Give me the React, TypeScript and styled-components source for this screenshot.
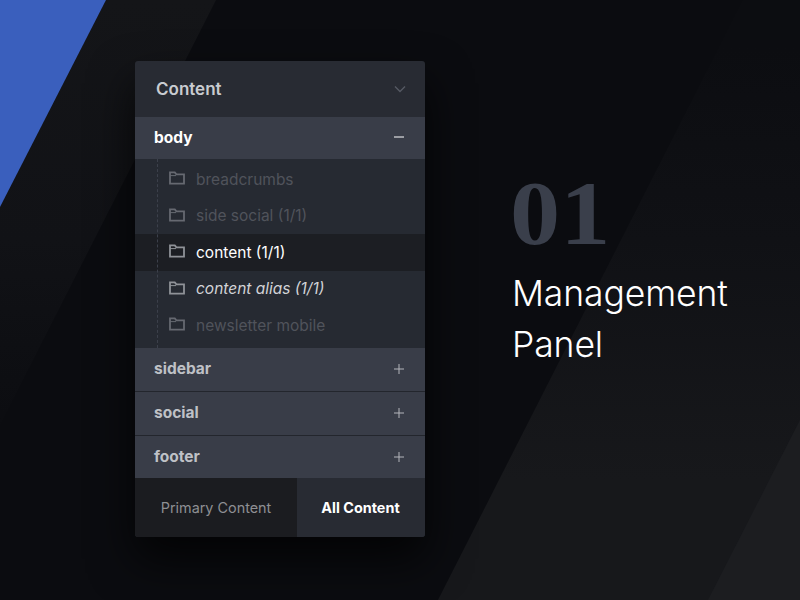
import React from "react";
import styled, { createGlobalStyle } from "styled-components";

const GlobalStyle = createGlobalStyle`
  html, body {
    margin: 0;
    padding: 0;
    background: #0b0c10;
  }
  * {
    box-sizing: border-box;
  }
`;

const Stage = styled.div`
  position: relative;
  display: flex;
  align-items: flex-start;
  width: 800px;
  height: 600px;
  padding: 61px 0 0 135px;
  overflow: hidden;
  background: #0b0c10;
  font-family: Inter, "Liberation Sans", sans-serif;
`;

const LeftBand = styled.div`
  position: absolute;
  inset: 0;
  background: linear-gradient(180deg, #141518 0%, #111216 40%, #0b0c10 75%);
  clip-path: polygon(106px 0, 216px 0, 0 425px, 0 207px);
`;

const BlueWedge = styled.div`
  position: absolute;
  inset: 0;
  background: #3a5fbd;
  clip-path: polygon(0 0, 106px 0, 0 207px);
`;

const RightBand = styled.div`
  position: absolute;
  inset: 0;
  background: linear-gradient(180deg, #0c0d11 8%, #101115 40%, #17181b 80%);
  clip-path: polygon(743px 0, 800px 0, 800px 600px, 438px 600px);
`;

const CornerBand = styled.div`
  position: absolute;
  inset: 0;
  background: #1c1d20;
  clip-path: polygon(800px 420px, 800px 600px, 708px 600px);
`;

const Panel = styled.div`
  position: relative;
  flex: none;
  width: 290px;
  height: 476px;
  border-radius: 3px;
  overflow: hidden;
  background: #282b33;
  box-shadow: 0 22px 45px rgba(0, 0, 0, 0.75);
`;

const PanelHeader = styled.div`
  display: flex;
  align-items: center;
  justify-content: space-between;
  height: 56px;
  padding: 0 19px 1px 21px;
  color: #c9cbd0;
  font-size: 17px;
  font-weight: 600;
`;

const SectionRow = styled.div<{ $height: number; $open?: boolean; $line?: boolean }>`
  display: flex;
  align-items: center;
  justify-content: space-between;
  height: ${(p) => p.$height}px;
  padding: 0 21px ${(p) => (p.$open || p.$line ? 2 : 1)}px 19px;
  background: #393d48;
  color: ${(p) => (p.$open ? "#ffffff" : "#bfc1c6")};
  font-size: 15.5px;
  font-weight: 700;
  border-bottom: ${(p) => (p.$line ? "1px solid #23262d" : "none")};
`;

const FolderList = styled.div`
  position: relative;
  height: 189px;
  padding-top: 2px;
  background: #262a32;
`;

const DashedLine = styled.div`
  position: absolute;
  top: 0;
  bottom: 0;
  left: 22px;
  border-left: 1px dashed #3c404b;
`;

const FolderRow = styled.div<{ $tone: "dim" | "active" | "alias" }>`
  display: flex;
  align-items: center;
  gap: 11px;
  height: 36.5px;
  padding-left: 34px;
  background: ${(p) => (p.$tone === "active" ? "#1c1e23" : "transparent")};
  color: ${(p) =>
    p.$tone === "active" ? "#ffffff" : p.$tone === "alias" ? "#d2d3d7" : "#50535b"};
  font-size: 15.5px;
  font-style: ${(p) => (p.$tone === "alias" ? "italic" : "normal")};
  svg {
    flex: none;
    margin-top: -2px;
    color: ${(p) => (p.$tone === "dim" ? "#666971" : "#8f9298")};
  }
`;

const Tabs = styled.div`
  display: flex;
  height: 59px;
`;

const Tab = styled.div<{ $active?: boolean }>`
  display: flex;
  align-items: center;
  justify-content: center;
  width: ${(p) => (p.$active ? "128px" : "162px")};
  padding-right: ${(p) => (p.$active ? "1px" : "0")};
  background: ${(p) => (p.$active ? "#282b33" : "#1b1c20")};
  color: ${(p) => (p.$active ? "#ffffff" : "#8e8f93")};
  font-size: 14.4px;
  font-weight: ${(p) => (p.$active ? 700 : 400)};
`;

const Title = styled.div`
  position: relative;
  flex: none;
  margin: 106px 0 0 87px;
`;

const Number = styled.div`
  color: #3a3f4b;
  font-family: "Liberation Serif", serif;
  font-size: 92px;
  font-weight: 700;
  line-height: 92px;
  transform: scaleX(1.09);
  transform-origin: left center;
  margin-left: -2px;
`;

const Heading = styled.div`
  margin-top: 9px;
  color: #ffffff;
  font-size: 35.5px;
  font-weight: 300;
  letter-spacing: -0.1px;
  line-height: 51px;
`;

const Folder = () => (
  <svg width="16" height="14" viewBox="0 0 16 14" fill="none" stroke="currentColor" strokeWidth="1.8">
    <path d="M1 12.6V1.4h4.8l1.6 2h7.6v9.2z" />
    <path d="M1 4.6h6" strokeWidth="1" />
  </svg>
);

const Chevron = () => (
  <svg width="12" height="8" viewBox="0 0 12 8" fill="none" stroke="#555963" strokeWidth="1.4">
    <path d="M1 1.5l5 5 5-5" />
  </svg>
);

const Toggle = ({ open }: { open?: boolean }) => (
  <svg width="10" height="10" viewBox="0 0 10 10" fill="none" stroke={open ? "#ffffff" : "#b4b6bb"} strokeWidth="1">
    <path d="M0 5h10" />
    {!open && <path d="M5 0v10" />}
  </svg>
);

const folders: { name: string; tone: "dim" | "active" | "alias" }[] = [
  { name: "breadcrumbs", tone: "dim" },
  { name: "side social (1/1)", tone: "dim" },
  { name: "content (1/1)", tone: "active" },
  { name: "content alias (1/1)", tone: "alias" },
  { name: "newsletter mobile", tone: "dim" },
];

export default function App() {
  return (
    <Stage>
      <GlobalStyle />
      <LeftBand />
      <RightBand />
      <CornerBand />
      <BlueWedge />
      <Panel>
        <PanelHeader>
          Content
          <Chevron />
        </PanelHeader>
        <SectionRow $height={42} $open>
          body
          <Toggle open />
        </SectionRow>
        <FolderList>
          <DashedLine />
          {folders.map((f) => (
            <FolderRow key={f.name} $tone={f.tone}>
              <Folder />
              {f.name}
            </FolderRow>
          ))}
        </FolderList>
        <SectionRow $height={44} $line>
          sidebar
          <Toggle />
        </SectionRow>
        <SectionRow $height={44} $line>
          social
          <Toggle />
        </SectionRow>
        <SectionRow $height={42}>
          footer
          <Toggle />
        </SectionRow>
        <Tabs>
          <Tab>Primary Content</Tab>
          <Tab $active>All Content</Tab>
        </Tabs>
      </Panel>
      <Title>
        <Number>01</Number>
        <Heading>
          Management
          <br />
          Panel
        </Heading>
      </Title>
    </Stage>
  );
}
